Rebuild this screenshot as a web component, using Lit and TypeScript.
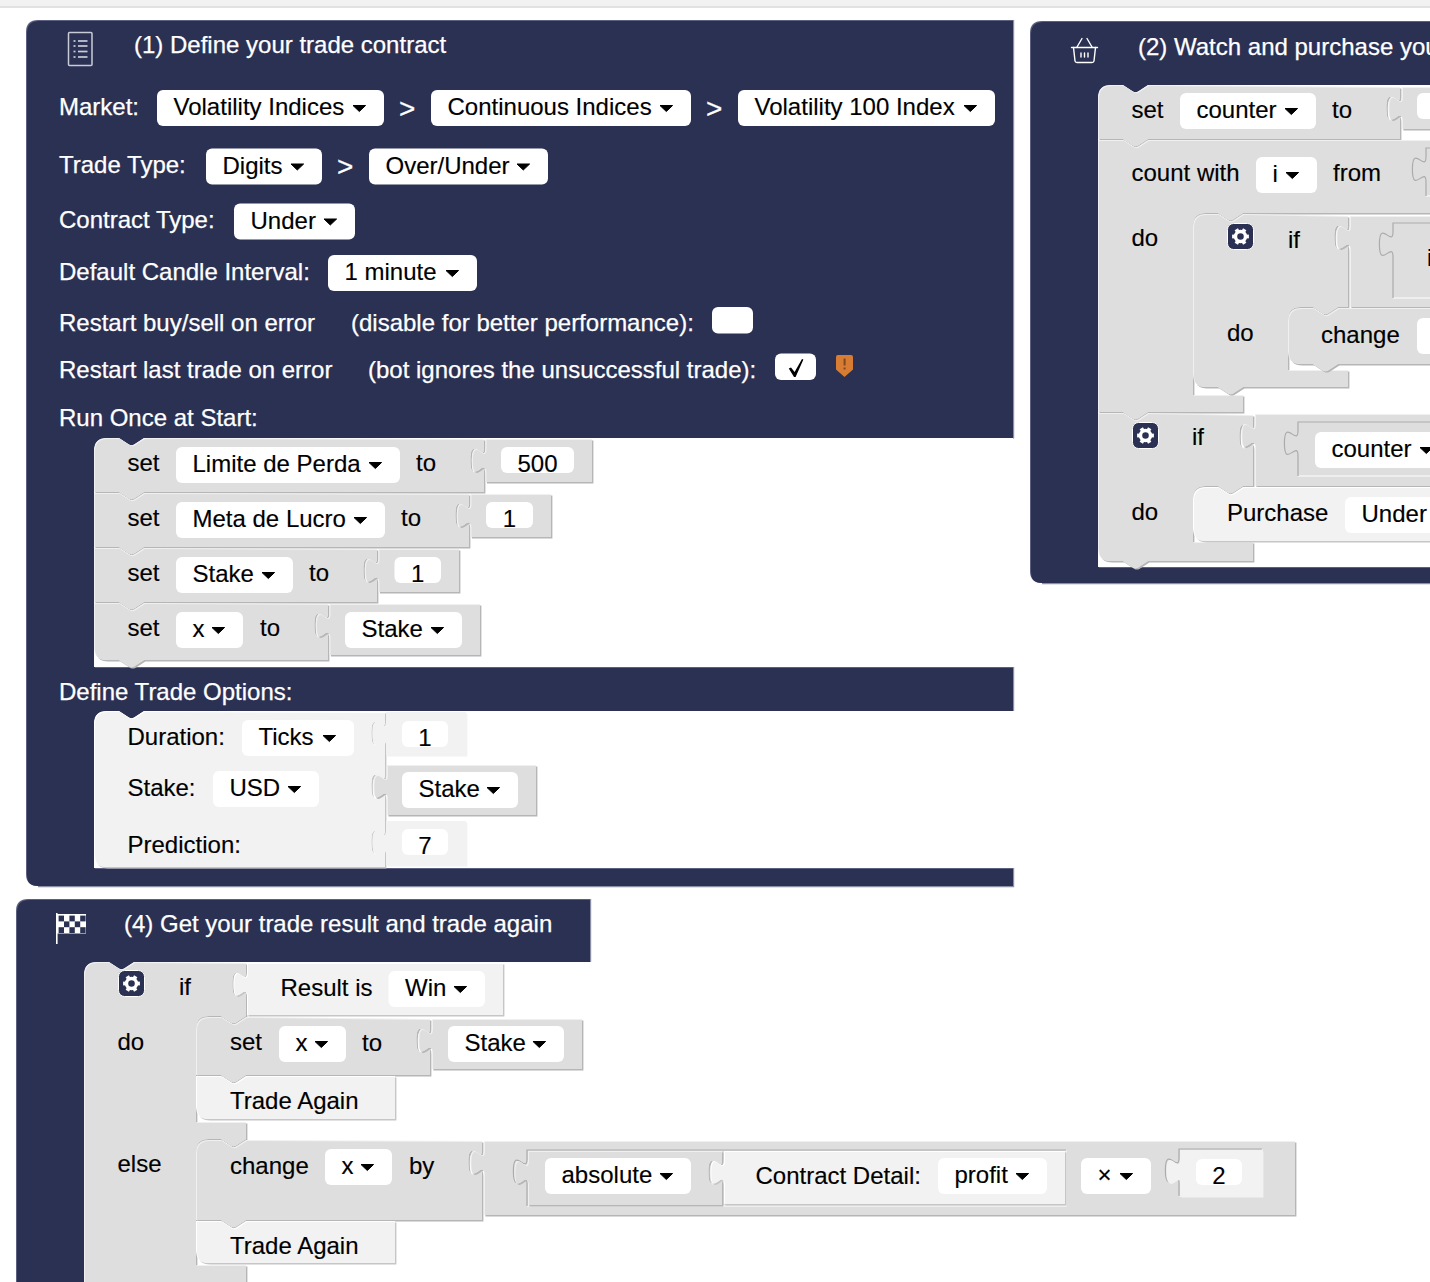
import { LitElement, html, svg, css } from "lit";
import { customElement } from "lit/decorators.js";

type Pal = { fill: string; light: string; dark: string };
const G: Pal = { fill: "#dedede", light: "#f0f0f0", dark: "#b6b6b6" };
const L: Pal = { fill: "#f2f2f2", light: "#ffffff", dark: "#c6c6c6" };
const S: Pal = { fill: "#f2f2f2", light: "#f2f2f2", dark: "#f2f2f2" };
const N: Pal = { fill: "#2b3153", light: "#5c6080", dark: "none" };

const R = 13;
const dipR = "l10,6.5 q2.5,1.3 5,0 l10,-6.5";
const dipL = "l-10,6.5 q-2.5,1.3 -5,0 l-10,-6.5";
const tabDown = "v8.5 c0,17 -13.6,-13.6 -13.6,12.75 s13.6,-4.25 13.6,12.75";
const tabUp = "c0,-17 -13.6,13.6 -13.6,-12.75 s13.6,4.25 13.6,-12.75 v-8.5";

const top = (x: number, y: number) =>
  `M${x},${y + R} Q${x},${y} ${x + R},${y} L${x + 25},${y} ${dipR} `;
const flatTop = (x: number, y: number) => `M${x},${y} L${x + 25},${y} ${dipR} `;
const bottom = (x: number, y: number, round = true, notch = true) =>
  (notch ? `L${x + 50},${y} ${dipL} ` : "") +
  (round ? `L${x + R},${y} Q${x},${y} ${x},${y - R} Z` : `L${x},${y} Z`);
const socket = (x: number, y: number) => `L${x},${y} ${tabDown} `;
const cut = (ix: number, y1: number, y2: number, xr: number) =>
  `L${ix + 50},${y1} ${dipL} L${ix + R},${y1} Q${ix},${y1} ${ix},${y1 + R} L${ix},${y2} L${xr},${y2} `;
const valuePath = (l: number, t: number, r: number, b: number) =>
  `M${l},${t} L${r},${t} L${r},${b} L${l},${b} L${l},${t + 34} ${tabUp} Z`;

let uid = 0;
const block = (d: string, p: Pal) => {
  const id = `clip${uid++}`;
  return svg`<clipPath id=${id}><path d=${d}></path></clipPath>
    <path d=${d} fill=${p.dark} transform="translate(1.4,1.4)"></path>
    <path d=${d} fill=${p.light}></path>
    <g clip-path=${`url(#${id})`}><path d=${d} fill=${p.fill} transform="translate(1,1)"></path></g>`;
};
const value = (l: number, t: number, r: number, b: number, p: Pal = G) =>
  block(valuePath(l, t, r, b), p);
const slot = (l: number, t: number, r: number, b: number) => svg`
  <path d=${`M${l},${b} L${r},${b} L${r},${t}`} fill="none" stroke="#f4f4f4" stroke-width="1.4"></path>
  <path d=${`M${l},${b} L${l},${t + 34} ${tabUp} L${r},${t}`} fill="none" stroke="#ababab" stroke-width="1.2"></path>`;

const label = (x: number, y: number, s: string, cls = "t") =>
  svg`<text x=${x} y=${y} class=${cls}>${s}</text>`;
const dd = (x: number, y: number, r: number, s: string, h = 36) => svg`
  <rect x=${x} y=${y} width=${r - x} height=${h} rx="6" fill="#fff"></rect>
  <text x=${x + 16.5} y=${y + 25} class="t">${s}</text>
  <path d=${`M${r - 31},${y + 15.5} h12.6 l-6.3,6 Z`} fill="#000" stroke="#000" stroke-linejoin="round"></path>`;
const num = (x: number, y: number, r: number, s: string) => svg`
  <rect x=${x} y=${y} width=${r - x} height="26" rx="6" fill="#fff"></rect>
  <text x=${(x + r) / 2} y=${y + 25} class="t mid">${s}</text>`;

const gear = (x: number, y: number) => {
  const cx = x + 13.5, cy = y + 13.5;
  const teeth = [0, 60, 120, 180, 240, 300].map((a) => {
    const c = Math.cos((a * Math.PI) / 180), s = Math.sin((a * Math.PI) / 180);
    return svg`<line x1=${cx + c * 5} y1=${cy + s * 5} x2=${cx + c * 8.4} y2=${cy + s * 8.4} stroke="#fff" stroke-width="3.8"></line>`;
  });
  return svg`<rect x=${x + 0.5} y=${y + 0.5} width="26" height="26" rx="6" fill="#2b3153" stroke="#fff" stroke-width="1"></rect>
    <circle cx=${cx} cy=${cy} r="5" fill="none" stroke="#fff" stroke-width="3.4"></circle>${teeth}`;
};

const docIcon = () => svg`
  <rect x="68.5" y="32.5" width="23.5" height="33" rx="1" fill="none" stroke="#c9cbd6" stroke-width="1.5"></rect>
  ${[41, 46, 51.5, 57].map(
    (y) => svg`<line x1="73.5" y1=${y} x2="75.5" y2=${y} stroke="#c9cbd6" stroke-width="1.7"></line>
      <line x1="78" y1=${y} x2="87.5" y2=${y} stroke="#c9cbd6" stroke-width="1.7"></line>`
  )}`;

const basket = () => svg`
  <g fill="none" stroke="#fff" stroke-width="1.4" stroke-linecap="round" stroke-linejoin="round">
    <path d="M1071.5,47.5 H1097.5"></path>
    <path d="M1073.5,47.5 L1075,61 Q1075.2,62.5 1077,62.5 H1092 Q1093.8,62.5 1094,61 L1095.5,47.5"></path>
    <path d="M1077,47 L1082,38.5 M1092,47 L1087,38.5"></path>
    <path d="M1081,53 V57 M1084.5,53 V57 M1088,53 V57"></path>
  </g>`;

const flag = () => {
  const cells = [];
  for (let r = 0; r < 3; r++)
    for (let c = 0; c < 5; c++)
      if ((r + c) % 2 === 0)
        cells.push(svg`<rect x=${58.6 + c * 5.4} y=${915.6 + r * 5.8} width="5.4" height="5.8" fill="#2b3153"></rect>`);
  return svg`<rect x="56" y="913" width="1.6" height="31" fill="#fff"></rect>
    <rect x="57" y="914" width="29" height="19.5" fill="#fff"></rect>${cells}`;
};

const rim = (d: string) =>
  svg`<path d=${d} fill="none" stroke="#8c8ea4" stroke-width="1.2"></path>`;

const frames = () => [
  block(
    `M26,32 Q26,20 38,20 L1013,20 L1013,438 ${cut(94, 438, 667, 1013)} L1013,711 ${cut(94, 711, 868, 1013)} L1013,886 L38,886 Q26,886 26,874 Z`,
    N
  ),
  rim("M1013.6,20 V438.6 M1013.6,667 V711 M1013.6,868 V886.6 H38"),
  block(
    `M1030,33 Q1030,21 1042,21 L1500,21 L1500,85 ${cut(1098, 85, 567, 1500)} L1500,583 L1042,583 Q1030,583 1030,571 Z`,
    N
  ),
  rim("M1042,583.6 H1430"),
  block(`M16,911 Q16,899 28,899 L590,899 L590,962 ${cut(84, 962, 1320, 84)} L16,1320 Z`, N),
  rim("M590.6,899 V962"),
];

const contract = () => [
  docIcon(),
  label(134, 53, "(1) Define your trade contract", "w"),
  label(59, 115, "Market:", "w"),
  dd(157, 90, 384, "Volatility Indices"),
  label(399, 117.5, ">", "w gt"),
  dd(431, 90, 691, "Continuous Indices"),
  label(706, 117.5, ">", "w gt"),
  dd(738, 90, 995, "Volatility 100 Index"),
  label(59, 172.5, "Trade Type:", "w"),
  dd(206, 148.5, 322, "Digits"),
  label(337, 175.5, ">", "w gt"),
  dd(369, 148.5, 548, "Over/Under"),
  label(59, 227.5, "Contract Type:", "w"),
  dd(234, 203.5, 355, "Under"),
  label(59, 280, "Default Candle Interval:", "w"),
  dd(328, 255, 477, "1 minute"),
  label(59, 331, "Restart buy/sell on error", "w"),
  label(351, 331, "(disable for better performance):", "w"),
  svg`<rect x="712" y="307" width="41" height="26.5" rx="6" fill="#fff"></rect>`,
  label(59, 378, "Restart last trade on error", "w"),
  label(368, 378, "(bot ignores the unsuccessful trade):", "w"),
  svg`<rect x="775" y="353.5" width="41" height="26.5" rx="6" fill="#fff"></rect>
    <path d="M788.8,368.4 L791,367.4 L794.6,372 L802,359 L803.4,359.6 L795.6,377 L794,377 Z" fill="#000"></path>
    <path d="M836,357 Q836,355 838,355 H851 Q853,355 853,357 V369.5 L844.5,377 L836,369.5 Z" fill="#d87b33"></path>
    <rect x="843.6" y="358.5" width="2" height="7" fill="#7d4a24"></rect>
    <rect x="843.6" y="367.5" width="2" height="2" fill="#7d4a24"></rect>`,
  label(59, 426, "Run Once at Start:", "w"),
  label(59, 700, "Define Trade Options:", "w"),

  block(`${top(94, 438)}${socket(484, 439)}L484,492 ${bottom(94, 492, false)}`, G),
  value(485.5, 439, 592, 482),
  num(501, 447, 574, "500"),
  label(127.5, 471, "set"),
  dd(176, 447, 400, "Limite de Perda"),
  label(416, 471, "to"),

  block(`${flatTop(94, 493)}${socket(469, 494)}L469,547 ${bottom(94, 547, false)}`, G),
  value(470.5, 494, 551, 537),
  num(486, 502, 533, "1"),
  label(127.5, 525.5, "set"),
  dd(176, 502, 385, "Meta de Lucro"),
  label(401, 526, "to"),

  block(`${flatTop(94, 548)}${socket(377, 549)}L377,602 ${bottom(94, 602, false)}`, G),
  value(378.5, 549, 459, 592),
  num(394.5, 557, 441, "1"),
  label(127.5, 580.5, "set"),
  dd(176, 557, 293, "Stake"),
  label(309, 581, "to"),

  block(`${flatTop(94, 603)}${socket(328, 604)}L328,660 ${bottom(94, 660, true)}`, G),
  value(329.5, 604, 480, 655),
  dd(345, 612, 462, "Stake"),
  label(127.5, 635.5, "set"),
  dd(176, 612, 243, "x"),
  label(260, 636, "to"),

  block(`${top(94, 711)}${socket(385, 712)}${socket(385, 765)}${socket(385, 821)}L385,867 ${bottom(94, 867, true, false)}`, L),
  value(386, 712, 466, 755, S),
  num(402, 721, 448, "1"),
  value(387, 765, 536, 815),
  dd(402, 772, 518, "Stake"),
  value(386, 821, 466, 865, S),
  num(402, 829, 448, "7"),
  label(127.5, 745, "Duration:"),
  dd(242, 720, 354, "Ticks"),
  label(127.5, 796, "Stake:"),
  dd(213, 771, 319, "USD"),
  label(127.5, 853, "Prediction:"),
];

const watch = () => [
  basket(),
  label(1138, 55, "(2) Watch and purchase your contract", "w"),

  block(`${top(1098, 85)}${socket(1400, 87)}L1400,139 ${bottom(1098, 139, false)}`, G),
  value(1402, 87, 1500, 129),
  svg`<rect x="1417" y="93" width="60" height="26" rx="6" fill="#fff"></rect>`,
  label(1131.5, 118, "set"),
  dd(1180, 93, 1316, "counter"),
  label(1332, 118, "to"),

  block(
    `${flatTop(1098, 140)}L1500,140 L1500,213 ${cut(1193, 213, 395, 1243)}L1243,412 ${bottom(1098, 412, false)}`,
    G
  ),
  slot(1426, 148, 1500, 196),
  label(1131.5, 180.5, "count with"),
  dd(1256, 157, 1317, "i"),
  label(1333, 180.5, "from"),
  label(1131.5, 246, "do"),

  block(
    `${top(1193, 214)}${socket(1348, 216)}L1348,307 ${cut(1288, 307, 370, 1348)}L1348,387 ${bottom(1193, 387)}`,
    G
  ),
  value(1350, 216, 1500, 307),
  slot(1393, 223, 1500, 298),
  label(1427, 266, "i"),
  gear(1227, 223),
  label(1288, 248, "if"),
  label(1227, 341, "do"),

  block(`${top(1288, 308)}L1500,308 L1500,364 ${bottom(1288, 364)}`, G),
  label(1321, 343, "change"),
  svg`<rect x="1417" y="318" width="60" height="36" rx="6" fill="#fff"></rect>`,

  block(
    `${flatTop(1098, 413)}${socket(1253, 415)}L1253,486 ${cut(1193, 486, 542, 1253)}L1253,561 ${bottom(1098, 561)}`,
    G
  ),
  value(1255, 414, 1500, 486),
  slot(1298, 422, 1500, 476),
  dd(1315, 432, 1451, "counter"),
  gear(1132, 422),
  label(1192, 445, "if"),
  label(1131.5, 520, "do"),

  block(`${top(1193, 487)}L1500,487 L1500,541 ${bottom(1193, 541, true, false)}`, L),
  label(1227, 521, "Purchase"),
  dd(1345, 497, 1500, "Under"),
];

const again = () => [
  flag(),
  label(124, 932, "(4) Get your trade result and trade again", "w"),

  block(
    `${top(84, 962)}${socket(246, 963)}L246,1016 ${cut(196, 1016, 1122, 246)}L246,1139 ${cut(196, 1139, 1265, 246)}L246,1400 L84,1400 Z`,
    G
  ),
  value(247, 963, 503, 1015, L),
  label(280.5, 995.5, "Result is"),
  dd(388.5, 971, 485, "Win"),
  gear(118, 970),
  label(179, 995, "if"),
  label(117.5, 1049.5, "do"),
  label(117.5, 1172, "else"),

  block(`${top(196, 1017)}${socket(430, 1019)}L430,1075 ${bottom(196, 1075, false)}`, G),
  value(432, 1019, 582, 1069),
  dd(448, 1026, 564, "Stake"),
  label(230, 1050, "set"),
  dd(279, 1026, 346, "x"),
  label(362, 1051, "to"),

  block(`${flatTop(196, 1076)}L395,1076 L395,1119 ${bottom(196, 1119, true, false)}`, L),
  label(230, 1109, "Trade Again"),

  block(`${top(196, 1140)}${socket(482, 1141)}L482,1220 ${bottom(196, 1220, false)}`, G),
  label(230, 1174, "change"),
  dd(325, 1149, 392, "x"),
  label(409, 1174, "by"),

  value(484, 1141, 1295, 1215),
  slot(527, 1150, 1066, 1206),
  block(`M528,1151 L722,1151 ${tabDown} L722,1205 L528,1205 L528,1185 ${tabUp} Z`, G),
  dd(545, 1158, 691, "absolute"),
  value(724, 1151, 1065, 1204, L),
  label(755.5, 1184, "Contract Detail:"),
  dd(938, 1158, 1047, "profit"),
  dd(1081, 1158, 1151, "×"),
  slot(1179, 1149, 1262, 1196),
  value(1180, 1150, 1262, 1196, S),
  num(1196, 1159, 1242, "2"),

  block(`${flatTop(196, 1221)}L395,1221 L395,1263 ${bottom(196, 1263, true, false)}`, L),
  label(230, 1254, "Trade Again"),
];

@customElement("app-root")
export class AppRoot extends LitElement {
  static styles = css`
    :host {
      display: block;
      width: 100%;
      height: 1282px;
      overflow: hidden;
      background: #fff;
    }
    .bar {
      height: 6px;
      background: #f2f2f2;
      border-bottom: 2px solid #e2e2e2;
    }
    .canvas {
      display: block;
      width: 1430px;
      height: 1274px;
    }
    text {
      font-family: "Liberation Sans", Arial, sans-serif;
      font-size: 24px;
      white-space: pre;
    }
    .t {
      fill: #000;
      stroke: #000;
      stroke-width: 0.15px;
    }
    .w {
      fill: #fff;
      stroke: #fff;
      stroke-width: 0.25px;
    }
    .gt {
      font-size: 28px;
    }
    .mid {
      text-anchor: middle;
    }
  `;

  render() {
    uid = 0;
    return html`<div class="bar"></div>
      <svg class="canvas" viewBox="0 8 1430 1274" xmlns="http://www.w3.org/2000/svg">
        ${frames()} ${contract()} ${watch()} ${again()}
      </svg>`;
  }
}
